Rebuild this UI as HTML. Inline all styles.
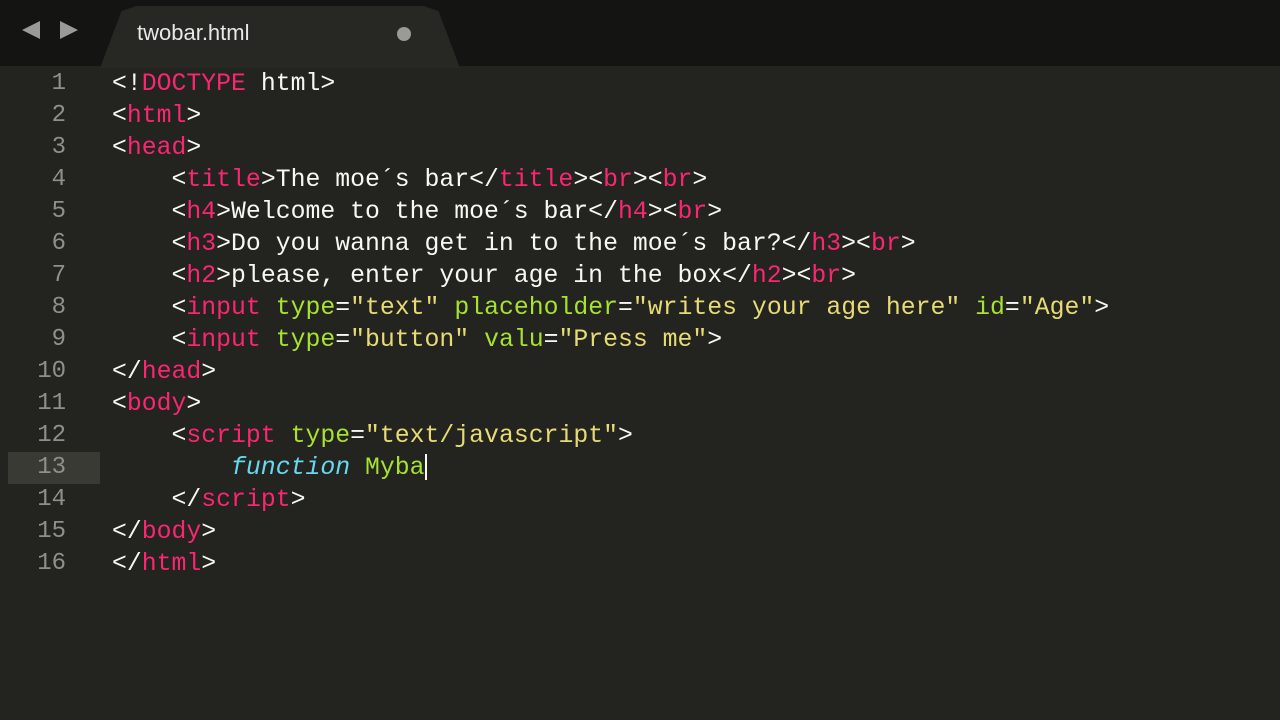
<html><head><style>
html,body{margin:0;width:1280px;height:720px;background:#1e1e1b;overflow:hidden;font-family:"Liberation Mono",monospace;}
.top{position:absolute;left:0;top:0;width:1280px;height:66px;background:#141412;}
.tab{position:absolute;left:100px;top:6px;width:360px;height:62px;background:#272723;clip-path:polygon(0 100%,6% 8%,10% 0,90% 0,94% 8%,100% 100%);}
.tabt{position:absolute;left:137px;top:20px;font:22px "Liberation Sans",sans-serif;color:#e8e8e8;}
.dot{position:absolute;left:397px;top:27px;width:14px;height:14px;border-radius:50%;background:#9a9a96;}
.ed{position:absolute;left:0;top:66px;width:1280px;height:654px;background:#23231f;}
.gut{position:absolute;left:0;top:68px;width:100px;}
.ln{height:32px;line-height:32px;text-align:right;padding-right:34px;font-size:24px;color:#8f908a;box-sizing:border-box;}
.hl{background:#3a3a35;margin-left:8px;width:92px;}
.code{position:absolute;left:112px;top:68px;font-size:24.8px;color:#f8f8f2;}
.code div{height:32px;line-height:32px;white-space:pre;}
.t{color:#f92672}.a{color:#a6e22e}.s{color:#e6db74}.f{color:#66d9ef;font-style:italic}
.cur{display:inline-block;width:2px;height:26px;background:#f8f8f0;vertical-align:middle}
</style></head><body>
<div class="top"></div>
<div class="ed"></div>
<div class="tab"></div>
<svg style="position:absolute;left:20px;top:18px" width="60" height="24"><polygon points="2,12 20,3 20,21" fill="#9a9a96"/><polygon points="40,3 58,12 40,21" fill="#9a9a96"/></svg>
<div class="tabt">twobar.html</div><div class="dot"></div>
<div class="gut"><div class="ln">1</div><div class="ln">2</div><div class="ln">3</div><div class="ln">4</div><div class="ln">5</div><div class="ln">6</div><div class="ln">7</div><div class="ln">8</div><div class="ln">9</div><div class="ln">10</div><div class="ln">11</div><div class="ln">12</div><div class="ln hl" style="padding-right:34px">13</div><div class="ln">14</div><div class="ln">15</div><div class="ln">16</div></div>
<div class="code"><div>&lt;!<span class="t">DOCTYPE</span> html&gt;</div><div>&lt;<span class="t">html</span>&gt;</div><div>&lt;<span class="t">head</span>&gt;</div><div>    &lt;<span class="t">title</span>&gt;The moe´s bar&lt;/<span class="t">title</span>&gt;&lt;<span class="t">br</span>&gt;&lt;<span class="t">br</span>&gt;</div><div>    &lt;<span class="t">h4</span>&gt;Welcome to the moe´s bar&lt;/<span class="t">h4</span>&gt;&lt;<span class="t">br</span>&gt;</div><div>    &lt;<span class="t">h3</span>&gt;Do you wanna get in to the moe´s bar?&lt;/<span class="t">h3</span>&gt;&lt;<span class="t">br</span>&gt;</div><div>    &lt;<span class="t">h2</span>&gt;please, enter your age in the box&lt;/<span class="t">h2</span>&gt;&lt;<span class="t">br</span>&gt;</div><div>    &lt;<span class="t">input</span> <span class="a">type</span>=<span class="s">"text"</span> <span class="a">placeholder</span>=<span class="s">"writes your age here"</span> <span class="a">id</span>=<span class="s">"Age"</span>&gt;</div><div>    &lt;<span class="t">input</span> <span class="a">type</span>=<span class="s">"button"</span> <span class="a">valu</span>=<span class="s">"Press me"</span>&gt;</div><div>&lt;/<span class="t">head</span>&gt;</div><div>&lt;<span class="t">body</span>&gt;</div><div>    &lt;<span class="t">script</span> <span class="a">type</span>=<span class="s">"text/javascript"</span>&gt;</div><div>        <span class="f">function</span> <span class="a">Myba</span><span class="cur"></span></div><div>    &lt;/<span class="t">script</span>&gt;</div><div>&lt;/<span class="t">body</span>&gt;</div><div>&lt;/<span class="t">html</span>&gt;</div></div>
</body></html>
